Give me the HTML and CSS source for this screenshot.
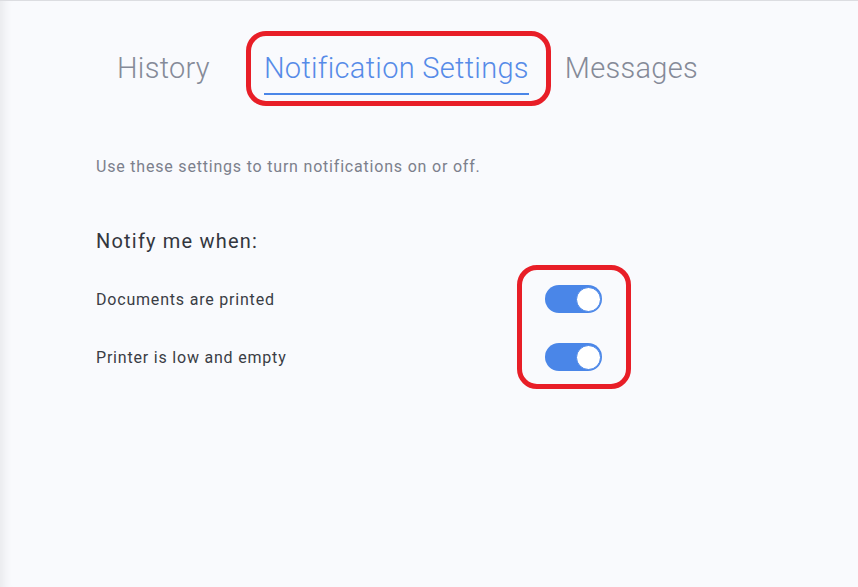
FILE: index.html
```html
<!DOCTYPE html>
<html>
<head>
  <meta charset="UTF-8" />
  <title>Notification Settings</title>
  <link rel="stylesheet" href="styles.css">
</head>
<body>
  <div class="page">
    <div class="tabs">
      <div class="tab">History</div>
      <div class="tab active">
        Notification Settings
        <span class="mark mark-tab"></span>
      </div>
      <div class="tab">Messages</div>
    </div>
    <div class="content">
      <p class="intro">Use these settings to turn notifications on or off.</p>
      <h2>Notify me when:</h2>
      <div class="options">
        <div class="row">
          <span class="label">Documents are printed</span>
          <span class="switch on"><span class="knob"></span></span>
        </div>
        <div class="row">
          <span class="label">Printer is low and empty</span>
          <span class="switch on"><span class="knob"></span></span>
        </div>
        <span class="mark mark-switches"></span>
      </div>
    </div>
  </div>
</body>
</html>
```

FILE: styles.css
```css
* {
  box-sizing: border-box;
}
body {
  margin: 0;
  background: #f9fafd;
  font-family: Roboto, "Noto Sans", sans-serif;
}
.page {
  min-height: 100vh;
  border-top: 1px solid #dcdde1;
  box-shadow: inset 12px 0 10px -8px rgba(0, 0, 0, 0.07);
}
.tabs {
  display: flex;
  padding-left: 117px;
  padding-top: 50px;
}
.tab {
  position: relative;
  font-size: 29px;
  font-weight: 300;
  line-height: 34px;
  letter-spacing: 0.3px;
  color: #858a98;
  padding-bottom: 8px;
  border-bottom: 2px solid transparent;
  margin-right: 36px;
}
.tab:first-child {
  margin-right: 54px;
}
.tab.active {
  color: #568be8;
  border-bottom-color: #4a86e8;
}
.content {
  padding-left: 96px;
  letter-spacing: 0.8px;
}
.intro {
  margin: 62px 0 0;
  font-size: 16px;
  line-height: 19px;
  color: #7c808c;
}
h2 {
  margin: 53px 0 0;
  font-size: 20px;
  font-weight: 400;
  line-height: 24px;
  letter-spacing: 1.2px;
  color: #33363e;
}
.options {
  position: relative;
  width: 506px;
  margin-top: 32px;
}
.row {
  display: flex;
  align-items: center;
  justify-content: space-between;
  height: 28px;
  margin-bottom: 30px;
}
.label {
  font-size: 16px;
  color: #3a3d45;
}
.switch {
  display: flex;
  align-items: center;
  justify-content: flex-end;
  width: 57px;
  height: 28px;
  padding: 0 1px;
  border-radius: 14px;
  background: #4a86e8;
}
.knob {
  width: 25px;
  height: 25px;
  border-radius: 50%;
  background: #fff;
  border: 1.5px solid #4a86e8;
}
.mark {
  position: absolute;
  border: 5px solid #e81e27;
  border-radius: 20px;
}
.mark-tab {
  left: -18px;
  right: -22px;
  top: -20px;
  bottom: -13px;
}
.mark-switches {
  left: 421px;
  right: -29px;
  top: -20px;
  bottom: -18px;
}
```
